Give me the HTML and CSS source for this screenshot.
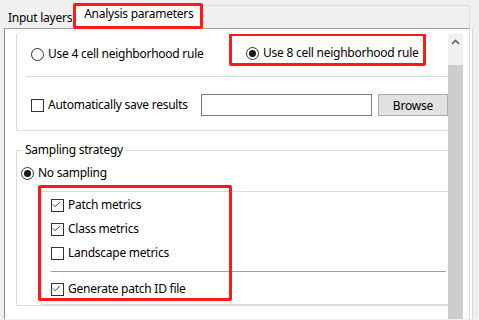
FILE: index.html
```html
<!DOCTYPE html>
<html lang="en">

<head>
    <meta charset="UTF-8">
    <title>Analysis parameters</title>
    <link rel="stylesheet" href="styles.css">
</head>

<body>
    <div class="tabs">
        <div class="tab">Input layers</div>
        <div class="tab active">Analysis parameters</div>
        <div class="tab-fill"></div>
    </div>

    <div class="panel">
        <div class="content">
            <div class="group-top">
                <div class="row-rule">
                    <label class="option first">
                        <span class="radio"></span>
                        Use 4 cell neighborhood rule
                    </label>
                    <div class="mark-rule">
                        <label class="option">
                            <span class="radio checked"></span>
                            Use 8 cell neighborhood rule
                        </label>
                    </div>
                </div>
                <div class="row-save">
                    <label class="option">
                        <span class="check"></span>
                        Automatically save results
                    </label>
                    <input class="path" type="text">
                    <button class="browse">Browse</button>
                </div>
            </div>

            <fieldset class="sampling">
                <legend>Sampling strategy</legend>
                <label class="option no-sampling">
                    <span class="radio checked"></span>
                    No sampling
                </label>
                <div class="metrics">
                    <div class="mark-metrics"></div>
                    <label class="option metric">
                        <span class="check checked"><svg viewBox="0 0 13 13"><polyline points="2.5,6.5 5,9 10.5,3.5" /></svg></span>
                        Patch metrics
                    </label>
                    <label class="option metric">
                        <span class="check checked"><svg viewBox="0 0 13 13"><polyline points="2.5,6.5 5,9 10.5,3.5" /></svg></span>
                        Class metrics
                    </label>
                    <label class="option metric">
                        <span class="check"></span>
                        Landscape metrics
                    </label>
                    <div class="sep"></div>
                    <label class="option metric last">
                        <span class="check checked"><svg viewBox="0 0 13 13"><polyline points="2.5,6.5 5,9 10.5,3.5" /></svg></span>
                        Generate patch ID file
                    </label>
                </div>
            </fieldset>
        </div>

        <div class="scrollbar">
            <div class="arrow-up">
                <svg viewBox="0 0 15 17" width="15" height="17"><polyline points="4,10 7.5,6.5 11,10" /></svg>
            </div>
            <div class="thumb"></div>
        </div>
    </div>
</body>

</html>
```

FILE: styles.css
```css
body {
    margin: 0;
    height: 320px;
    overflow: hidden;
    background-color: #f0f0f0;
    font-family: "Noto Sans", "DejaVu Sans", sans-serif;
    font-size: 12px;
    letter-spacing: -0.25px;
    color: #000;
}

/* tab strip */

.tabs {
    display: flex;
    align-items: flex-end;
    height: 28px;
}

.tab {
    margin-left: 2px;
    padding: 0 5px 0 6px;
    height: 20px;
    line-height: 19px;
}

.tab.active {
    position: relative;
    z-index: 1;
    margin-left: -4px;
    margin-bottom: -1px;
    height: 17px;
    padding: 0 6px 3px 8px;
    line-height: 16px;
    background-color: #fff;
    border: 3px solid #ff1a1a;
    border-radius: 2px;
}

.tab-fill {
    flex: 1;
    align-self: stretch;
    margin: 5px 9px 0 0;
    border-top: 1px solid #dadada;
    border-right: 1px solid #dadada;
}

/* panel */

.panel {
    display: flex;
    margin-left: 4px;
    width: 466px;
    height: 291px;
    padding-top: 5px;
    box-sizing: border-box;
    background-color: #fff;
    border-top: 1px solid #a0a0a0;
    border-left: 1px solid #8c8c8c;
    border-right: 1px solid #dadada;
    box-shadow: 2px 0 0 #fff, 3px 0 0 #dadada;
}

.content {
    flex: 1;
    overflow: hidden;
}

.scrollbar {
    display: flex;
    flex-direction: column;
    width: 15px;
    margin-right: 6px;
    background-color: #f0f0f0;
}

.arrow-up {
    height: 17px;
}

.arrow-up svg {
    display: block;
    fill: none;
    stroke: #606060;
    stroke-width: 1.6;
}

.thumb {
    flex: 1;
    margin-top: 14px;
    background-color: #cdcdcd;
}

/* options */

.option {
    display: flex;
    align-items: center;
    gap: 4px;
    height: 16px;
    line-height: 16px;
    white-space: nowrap;
}

.radio {
    position: relative;
    width: 11px;
    height: 11px;
    border: 1px solid #333;
    border-radius: 50%;
    background-color: #fff;
    flex: none;
}

.radio.checked::after {
    content: "";
    position: absolute;
    left: 2px;
    top: 2px;
    width: 7px;
    height: 7px;
    border-radius: 50%;
    background-color: #1a1a1a;
}

.check {
    width: 11px;
    height: 11px;
    border: 1px solid #333;
    background-color: #fff;
    flex: none;
}

.check svg {
    display: block;
    width: 11px;
    height: 11px;
    margin: -1px 0 0 -1px;
    overflow: visible;
    fill: none;
    stroke: #333;
    stroke-width: 1.1;
}

/* first group */

.group-top {
    margin-left: 11px;
    height: 96px;
    border-left: 1px solid #dcdcdc;
    border-bottom: 1px solid #dcdcdc;
}

.row-rule {
    display: grid;
    grid-template-columns: 198px auto;
    align-items: start;
    height: 42px;
    margin-left: 9px;
    padding-left: 5px;
    border-bottom: 1px solid #dcdcdc;
}

.row-rule .first {
    margin-top: 12px;
}

.mark-rule {
    justify-self: start;
    margin-top: -1px;
    padding: 9px 4px 2px 14px;
    border: 3px solid #ff1a1a;
    border-radius: 2px;
}

.row-save {
    display: flex;
    align-items: center;
    height: 22px;
    padding: 17px 0 0 14px;
}

.path {
    margin: 0 6px 0 auto;
    width: 171px;
    height: 22px;
    box-sizing: border-box;
    border: 1px solid #7a7a7a;
    padding: 0 3px;
}

.browse {
    width: 70px;
    height: 22px;
    padding: 0;
    background-color: #e1e1e1;
    border: 1px solid #adadad;
    font-family: inherit;
    font-size: 12px;
    letter-spacing: -0.2px;
    color: #000;
}

/* sampling group */

.sampling {
    margin: 11px 0 0 11px;
    padding: 0 0 0 4px;
    border: 1px solid #dcdcdc;
    border-right: none;
    min-width: 0;
}

.sampling legend {
    margin-left: 2px;
    padding: 0 2px;
    line-height: 16px;
}

.no-sampling {
    margin-top: 7px;
}

.metrics {
    position: relative;
    margin: 10px 0 0 20px;
    padding: 1px 0 3px 9px;
    border: 1px solid #dcdcdc;
    border-right: none;
}

.metric {
    height: 24px;
}

.metric.last {
    margin-top: 5px;
}

.sep {
    margin: 6px 2px 0 0;
    height: 1px;
    background-color: #a0a0a0;
}

.mark-metrics {
    position: absolute;
    left: -4px;
    top: -7px;
    width: 188px;
    height: 110px;
    border: 3px solid #ff1a1a;
    border-radius: 2px;
}
```
